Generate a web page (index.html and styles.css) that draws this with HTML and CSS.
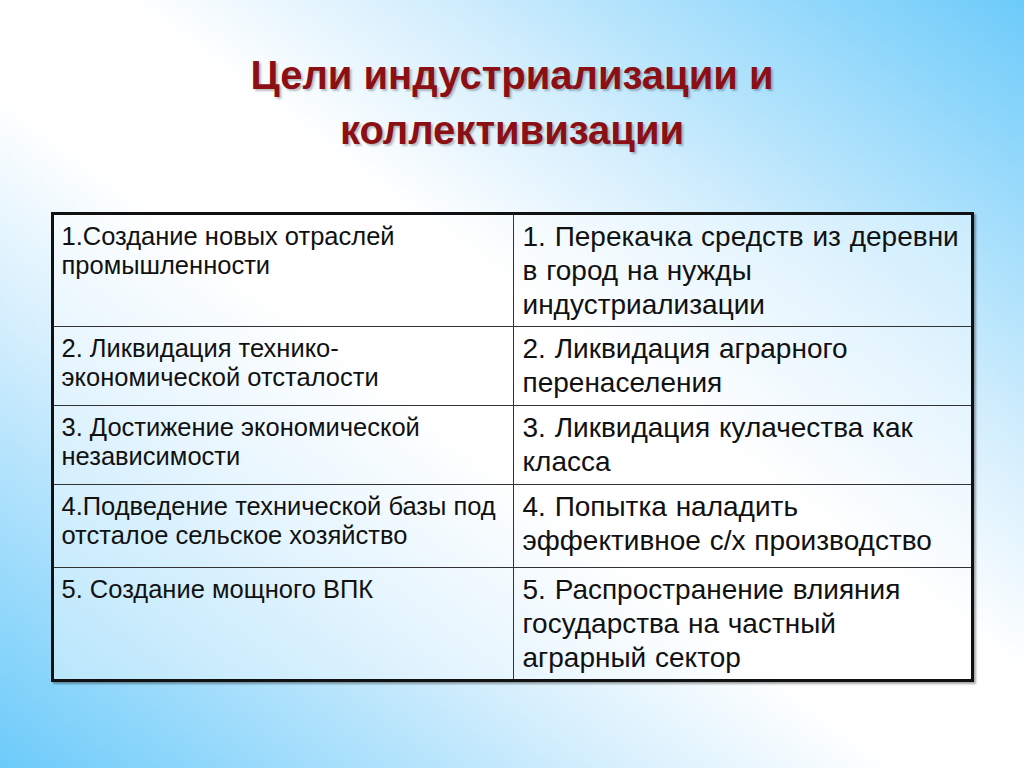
FILE: index.html
```html
<!DOCTYPE html>
<html lang="ru">
<head>
<meta charset="utf-8">
<title>Цели индустриализации и коллективизации</title>
<link rel="stylesheet" href="styles.css">
</head>
<body>
<main class="slide">
  <h1 class="title">Цели индустриализации и<br>коллективизации</h1>
  <table class="goals">
    <tr class="r1">
      <td class="left">1.Создание новых отраслей промышленности</td>
      <td class="right">1. Перекачка средств из деревни в город на нужды индустриализации</td>
    </tr>
    <tr class="r2">
      <td class="left">2. Ликвидация технико-<br>экономической отсталости</td>
      <td class="right">2. Ликвидация аграрного перенаселения</td>
    </tr>
    <tr class="r3">
      <td class="left">3. Достижение экономической независимости</td>
      <td class="right">3. Ликвидация кулачества как класса</td>
    </tr>
    <tr class="r4">
      <td class="left">4.Подведение технической базы под отсталое сельское хозяйство</td>
      <td class="right">4. Попытка наладить эффективное с/х производство</td>
    </tr>
    <tr class="r5">
      <td class="left">5. Создание мощного ВПК</td>
      <td class="right">5. Распространение влияния государства на частный аграрный сектор</td>
    </tr>
  </table>
</main>
</body>
</html>
```
FILE: styles.css
```css
html, body {
  margin: 0;
  padding: 0;
}
body {
  width: 1024px;
  height: 768px;
  overflow: hidden;
  background: linear-gradient(to bottom left, #6ccbfa 0%, #d6effd 30%, #ffffff 44%, #ffffff 56%, #d6effd 70%, #6ccbfa 100%);
  font-family: "Liberation Sans", Arial, sans-serif;
}
.slide {
  display: flex;
  flex-direction: column;
  align-items: center;
  padding-top: 48px;
}
.title {
  margin: 0;
  font-size: 40px;
  line-height: 55px;
  font-weight: bold;
  color: #8b0f14;
  text-align: center;
  text-shadow: 2px 2px 2px rgba(0, 0, 0, 0.25);
}
.goals {
  margin-top: 54px;
  width: 923px;
  border-collapse: collapse;
  border: 3px solid #111;
  box-shadow: 2px 2px 2px rgba(0, 0, 0, 0.35);
  color: #111;
}
.goals td {
  border: 1px solid #333;
  vertical-align: top;
  background: rgba(255, 255, 255, 0.4);
}
.left {
  width: 443px;
  padding: 7px 8px 5px 8px;
  font-size: 25.5px;
  line-height: 29px;
}
.right {
  padding: 5px 8px 4px 9px;
  font-size: 28px;
  line-height: 34px;
  word-spacing: 1px;
}
.r1 { height: 110px; }
.r2 { height: 79px; }
.r3 { height: 79px; }
.r4 { height: 83px; }
.r5 { height: 110px; }
```
